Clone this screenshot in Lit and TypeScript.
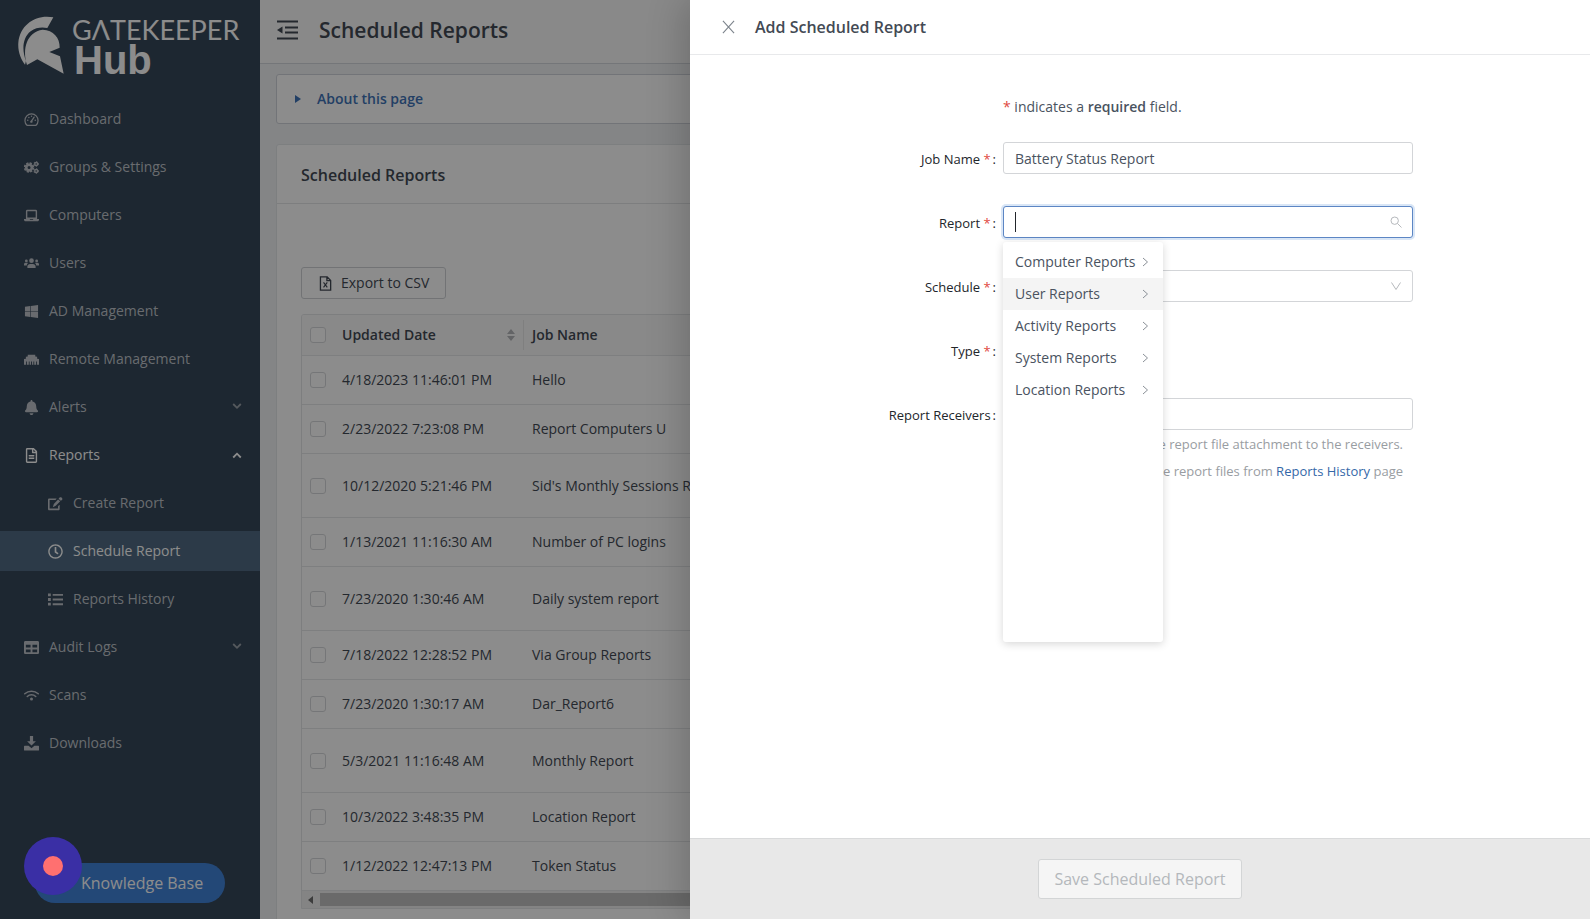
import { LitElement, html, svg, css, nothing } from "lit";
import { customElement, property } from "lit/decorators.js";

const icons: Record<string, { box: string; body: unknown }> = {
  dashboard: {
    box: "0 0 16 16",
    body: svg`<path d="M3.2 14.2a7 7 0 1 1 9.6 0z" fill="none" stroke="currentColor" stroke-width="1.3" stroke-linejoin="round"/><path d="M7.4 10.6 10.8 5.4" stroke="currentColor" stroke-width="1.3" stroke-linecap="round"/><circle cx="8" cy="10.3" r="1.2"/><circle cx="8" cy="4.6" r=".8"/><circle cx="5.2" cy="5.8" r=".8"/><circle cx="4" cy="8.8" r=".8"/><circle cx="12" cy="8.8" r=".8"/>`,
  },
  cogs: {
    box: "0 0 16 16",
    body: svg`<circle cx="5.4" cy="8" r="3" fill="none" stroke="currentColor" stroke-width="2.8"/><circle cx="5.4" cy="8" r="4.7" fill="none" stroke="currentColor" stroke-width="1.8" stroke-dasharray="2.4 1.29"/><circle cx="13" cy="4.2" r="1.6" fill="none" stroke="currentColor" stroke-width="1.5"/><circle cx="13" cy="4.2" r="2.5" fill="none" stroke="currentColor" stroke-width="1" stroke-dasharray="1.3 1.32"/><circle cx="13" cy="11.8" r="1.6" fill="none" stroke="currentColor" stroke-width="1.5"/><circle cx="13" cy="11.8" r="2.5" fill="none" stroke="currentColor" stroke-width="1" stroke-dasharray="1.3 1.32"/>`,
  },
  laptop: {
    box: "0 0 16 16",
    body: svg`<path d="M2.8 11V3.4c0-.5.4-.8.8-.8h8.8c.5 0 .8.4.8.8V11z" fill="none" stroke="currentColor" stroke-width="1.5"/><path d="M0 11.6h6l.5.8h3l.5-.8h6v.8c0 1-.8 1.6-1.6 1.6H1.6C.7 14 0 13.300 0 12.400z"/>`,
  },
  users: {
    box: "0 0 16 16",
    body: svg`<circle cx="8" cy="5" r="2.5"/><path d="M3.600 12.800v-1.500c0-1.700 1.300-2.900 3-2.900h2.800c1.700 0 3 1.200 3 2.900v1.500z"/><circle cx="2.500" cy="5.200" r="1.500"/><circle cx="13.500" cy="5.200" r="1.500"/><path d="M0 10V8.800c0-1 .7-1.700 1.600-1.700h1.600c.5 0 .8.1 1.100.4C3.500 8.100 3 9 2.900 10zM16 10V8.800c0-1-.7-1.700-1.600-1.700h-1.600c-.5 0-.8.1-1.100.4.8.6 1.300 1.500 1.400 2.500z"/>`,
  },
  windows: {
    box: "0 0 448 512",
    body: svg`<path d="M0 93.700l183.600-25.300v177.400H0V93.700zm0 324.600l183.600 25.300V268.400H0v149.900zm203.800 28L448 480V268.400H203.800v177.900zm0-380.600v180.100H448V32L203.800 65.700z"/>`,
  },
  remote: {
    box: "0 0 16 16",
    body: svg`<path d="M0 13.600V7.500l2-.2V5l2-.2V3h8v1.800l2 .2v2.300l2 .2v6.100h-2.200V10h-.9v3.600h-2V10H10v3.600H8.500V10h-1v3.600H6V10H5.100v3.600h-2V10h-.9v3.600z"/>`,
  },
  bell: {
    box: "0 0 448 512",
    body: svg`<path d="M224 512c35.320 0 63.970-28.650 63.970-64H160.030c0 35.350 28.650 64 63.970 64zm215.390-149.710c-19.320-20.760-55.470-51.990-55.470-154.290 0-77.700-54.480-139.900-127.940-155.160V32c0-17.670-14.320-32-31.980-32s-31.980 14.330-31.980 32v20.840C118.560 68.100 64.080 130.300 64.080 208c0 102.300-36.150 133.530-55.470 154.290-6 6.450-8.660 14.160-8.610 21.710.11 16.400 12.980 32 32.100 32h383.800c19.120 0 32-15.600 32.100-32 .05-7.550-2.610-15.270-8.610-21.710z"/>`,
  },
  file: {
    box: "0 0 384 512",
    body: svg`<path d="M288 248v28c0 6.600-5.400 12-12 12H108c-6.600 0-12-5.400-12-12v-28c0-6.600 5.400-12 12-12h168c6.600 0 12 5.400 12 12zm-12 72H108c-6.600 0-12 5.400-12 12v28c0 6.600 5.400 12 12 12h168c6.600 0 12-5.400 12-12v-28c0-6.600-5.400-12-12-12zm108-188.100V464c0 26.500-21.500 48-48 48H48c-26.500 0-48-21.500-48-48V48C0 21.500 21.500 0 48 0h204.100C264.800 0 277 5.100 286 14.100L369.900 98c9 8.900 14.100 21.200 14.100 33.900zm-128-80V128h76.100L256 51.900zM336 464V176H232c-13.300 0-24-10.700-24-24V48H48v416h288z"/>`,
  },
  edit: {
    box: "0 0 576 512",
    body: svg`<path d="M402.300 344.900l32-32c5-5 13.700-1.500 13.700 5.700V464c0 26.500-21.500 48-48 48H48c-26.500 0-48-21.500-48-48V112c0-26.500 21.500-48 48-48h273.500c7.100 0 10.700 8.600 5.700 13.700l-40 44c-1.500 1.500-3.500 2.300-5.700 2.300H62v326h324V362c0-2.100.8-10 2.300-11z"/><path d="M470 172 296.300 345.900l-110.400 50 38-118L386 100zM490 150l-82-78 38-42c22-22 52-22 74 0l16 16c24 24 24 54 0 76z"/>`,
  },
  clock: {
    box: "0 0 512 512",
    body: svg`<path d="M256 8C119 8 8 119 8 256s111 248 248 248 248-111 248-248S393 8 256 8zm0 448c-110.500 0-200-89.500-200-200S145.500 56 256 56s200 89.500 200 200-89.500 200-200 200zm61.800-104.400l-84.900-61.700c-3.100-2.300-4.900-5.900-4.900-9.700V116c0-6.600 5.400-12 12-12h32c6.600 0 12 5.400 12 12v141.700l66.800 48.600c5.400 3.900 6.500 11.400 2.600 16.800L334.600 349c-3.900 5.300-11.400 6.500-16.800 2.600z"/>`,
  },
  list: {
    box: "0 0 16 16",
    body: svg`<path d="M0 1.500h3v3H0zM0 6.500h3v3H0zM0 11.500h3v3H0zM5 2h11v2H5zM5 7h11v2H5zM5 12h11v2H5z"/>`,
  },
  table: {
    box: "0 0 512 512",
    body: svg`<path d="M464 32H48C21.490 32 0 53.490 0 80v352c0 26.510 21.490 48 48 48h416c26.510 0 48-21.490 48-48V80c0-26.510-21.490-48-48-48zM224 416H64v-96h160v96zm0-160H64v-96h160v96zm224 160H288v-96h160v96zm0-160H288v-96h160v96z"/>`,
  },
  wifi: {
    box: "0 0 16 16",
    body: svg`<path d="M.8 6.200a10.500 10.500 0 0 1 14.400 0M3.500 9a6.600 6.600 0 0 1 9 0" fill="none" stroke="currentColor" stroke-width="1.600" stroke-linecap="round"/><circle cx="8" cy="11.800" r="1.600"/>`,
  },
  download: {
    box: "0 0 16 16",
    body: svg`<path d="M6.300 0h3.400v5.500h3L8 10.200 3.300 5.500h3z"/><path d="M0 11.200c0-.4.300-.7.700-.7h4.200L8 13l3.100-2.500h4.200c.4 0 .7.300.7.700v3.600c0 .4-.3.700-.7.700H.7c-.4 0-.7-.3-.7-.7z"/>`,
  },
  chevronDown: {
    box: "0 0 10 10",
    body: svg`<path d="m1.200 2 3.800 3.800L8.800 2" fill="none" stroke="currentColor" stroke-width="1.800"/>`,
  },
  chevronUp: {
    box: "0 0 10 10",
    body: svg`<path d="M1.200 7.500 5 3.700l3.800 3.800" fill="none" stroke="currentColor" stroke-width="1.800"/>`,
  },
  chevronRight: {
    box: "0 0 10 10",
    body: svg`<path d="m2 1 4.500 4L2 9" fill="none" stroke="currentColor" stroke-width="1"/>`,
  },
  arrowDown: {
    box: "0 0 12 12",
    body: svg`<path d="m1.500 2.500 4.500 7 4.500-7" fill="none" stroke="currentColor" stroke-width="1"/>`,
  },
  search: {
    box: "0 0 12 12",
    body: svg`<circle cx="4.700" cy="4.700" r="3.700" fill="none" stroke="currentColor"/><path d="m7.500 7.500 4 4" stroke="currentColor"/>`,
  },
  close: {
    box: "0 0 14 14",
    body: svg`<path d="m1 .5 12 13M13 .5l-12 13" fill="none" stroke="currentColor" stroke-width="1.200"/>`,
  },
  outdent: {
    box: "0 0 22 20",
    body: svg`<path d="M0 1.500h21M8 7.500h13M8 12.500h13M0 18.500h21" stroke="currentColor" stroke-width="1.800"/><path d="M5.500 6.500v7L0 10z"/>`,
  },
  excel: {
    box: "0 0 14 16",
    body: svg`<path d="M1.600 1h7.200l3.700 3.700V15H1.600zM8.500 1v4h4" fill="none" stroke="currentColor" stroke-width="1.400"/><path d="m4.900 6.800 4 5.400M8.900 6.800l-4 5.400" stroke="currentColor" stroke-width="1.200"/>`,
  },
  caretRight: { box: "0 0 6 8", body: svg`<path d="M0 0v8l6-4z"/>` },
  caretLeft: { box: "0 0 6 8", body: svg`<path d="M5 0v8L0 4z"/>` },
  sorter: { box: "0 0 8 12", body: svg`<path d="M0 5 4 0l4 5zM0 7l4 5 4-5z"/>` },
};

@customElement("hub-icon")
class HubIcon extends LitElement {
  @property() name = "";

  static styles = css`
    :host { display: inline-flex; width: 15px; height: 15px; flex: none; }
    .glyph { width: 100%; height: 100%; fill: currentColor; }
  `;

  render() {
    const icon = icons[this.name];
    return icon
      ? html`<svg class="glyph" viewBox=${icon.box} aria-hidden="true">${icon.body}</svg>`
      : nothing;
  }
}

interface NavItem {
  icon: string;
  text: string;
  sub?: boolean;
  active?: boolean;
  open?: boolean;
  chevron?: string;
}

const navItems: NavItem[] = [
  { icon: "dashboard", text: "Dashboard" },
  { icon: "cogs", text: "Groups & Settings" },
  { icon: "laptop", text: "Computers" },
  { icon: "users", text: "Users" },
  { icon: "windows", text: "AD Management" },
  { icon: "remote", text: "Remote Management" },
  { icon: "bell", text: "Alerts", chevron: "chevronDown" },
  { icon: "file", text: "Reports", chevron: "chevronUp", open: true },
  { icon: "edit", text: "Create Report", sub: true },
  { icon: "clock", text: "Schedule Report", sub: true, active: true },
  { icon: "list", text: "Reports History", sub: true },
  { icon: "table", text: "Audit Logs", chevron: "chevronDown" },
  { icon: "wifi", text: "Scans" },
  { icon: "download", text: "Downloads" },
];

@customElement("hub-sidebar")
class HubSidebar extends LitElement {
  static styles = css`
    :host {
      display: flex; flex-direction: column; width: 260px; flex: none;
      background: #364759; color: #bfc4ca; font-size: 14px; line-height: 20px;
    }
    .logo { display: flex; gap: 8px; height: 64px; padding: 16px 0 0 18px; margin-bottom: 19px; color: #fff; }
    .helmet { width: 46px; height: 58px; fill: currentColor; }
    .brand { display: flex; flex-direction: column; }
    .word { font: 400 27px/28px Lato, sans-serif; }
    .hub { font: 700 40px/32px "Liberation Sans", Arial, sans-serif; padding-left: 2px; }
    .item {
      display: flex; align-items: center; gap: 10px; height: 40px; margin-bottom: 8px;
      padding: 0 18px 0 24px; color: inherit; text-decoration: none;
    }
    .sub { padding-left: 48px; }
    .active { background: #506b83; }
    .text { flex: 1; }
    .chev { width: 10px; height: 10px; color: #9ba2aa; }
    .open, .active, .open .chev { color: #fff; }
    .kb {
      height: 40px; width: 190px; margin: auto 0 16px 35px; padding: 0 0 0 46px;
      border: 0; border-radius: 20px; background: #4183d9; color: #fff;
      font: 16px/24px "Open Sans", sans-serif; text-align: left; white-space: nowrap;
    }
  `;

  render() {
    return html`
      <div class="logo">
        <svg class="helmet" viewBox="54 52 138 174" aria-hidden="true">
          <path d="M160 56C110 46 60 76 55 132c-2 28 8 50 20 66l3-12C66 158 66 118 92 98c16-12 34-13 50-10z" />
          <path d="M81 199C66 150 80 100 128 93c32 0 52 25 51 54l-31 13 32 13 11 52-79-43z" />
        </svg>
        <div class="brand"><span class="word">GΛTEKEEPER</span><span class="hub">Hub</span></div>
      </div>
      <nav>
        ${navItems.map(
          (n) => html`<a href="#" class="item ${n.sub ? "sub" : ""} ${n.active ? "active" : ""} ${n.open ? "open" : ""}">
            <hub-icon name=${n.icon}></hub-icon><span class="text">${n.text}</span>
            ${n.chevron ? html`<hub-icon class="chev" name=${n.chevron}></hub-icon>` : nothing}
          </a>`
        )}
      </nav>
      <button class="kb">Knowledge Base</button>
    `;
  }
}

const rows: [string, string, boolean][] = [
  ["4/18/2023 11:46:01 PM", "Hello", false],
  ["2/23/2022 7:23:08 PM", "Report Computers U", false],
  ["10/12/2020 5:21:46 PM", "Sid's Monthly Sessions Report", true],
  ["1/13/2021 11:16:30 AM", "Number of PC logins", false],
  ["7/23/2020 1:30:46 AM", "Daily system report", true],
  ["7/18/2022 12:28:52 PM", "Via Group Reports", false],
  ["7/23/2020 1:30:17 AM", "Dar_Report6", false],
  ["5/3/2021 11:16:48 AM", "Monthly Report", true],
  ["10/3/2022 3:48:35 PM", "Location Report", false],
  ["1/12/2022 12:47:13 PM", "Token Status", false],
];

@customElement("hub-page")
class HubPage extends LitElement {
  static styles = css`
    :host {
      display: flex; flex-direction: column; flex: 1; min-width: 0;
      background: #f0f2f5; color: #434a54; font-size: 14px; line-height: 20px;
    }
    .top {
      display: flex; align-items: center; gap: 20px; height: 64px; flex: none; padding: 0 17px 4px;
      box-sizing: border-box; background: #f9f9f9; border-bottom: 1px solid #d4d7dc;
    }
    .fold { width: 22px; height: 20px; }
    .h1 { margin: 0; font-size: 21px; line-height: 30px; font-weight: 600; }
    .content { display: flex; flex-direction: column; gap: 20px; padding: 10px 17px 0 16px; }
    .about {
      display: flex; align-items: center; gap: 16px; height: 50px; box-sizing: border-box; padding: 0 18px;
      background: #fff; border: 1px solid #d0d4da; border-radius: 3px; color: #3f74b8; font-weight: 600;
    }
    .caret { width: 6px; height: 8px; }
    .card { background: #fff; border: 1px solid #e4e7ea; border-radius: 3px; }
    .h2 { margin: 0; padding: 19px 24px 17px; font-size: 16px; line-height: 22px; font-weight: 600; border-bottom: 1px solid #e3e5e8; }
    .body { padding: 63px 24px; }
    .export {
      display: flex; align-items: center; gap: 8px; height: 32px; padding: 0 16px; box-sizing: border-box;
      background: #fff; border: 1px solid #cfd2d6; border-radius: 3px; color: inherit; font: inherit;
    }
    .grid { margin-top: 15px; border: 1px solid #e3e5e8; border-top-left-radius: 3px; overflow: hidden; }
    table { width: 1400px; table-layout: fixed; border-collapse: separate; border-spacing: 0; }
    th, td { box-sizing: border-box; height: 49px; padding: 0 8px; border-bottom: 1px solid #e6e8ea; text-align: left; }
    th { height: 41px; background: #fafafa; font-weight: 600; }
    .tall { height: 64px; }
    .tick-col { width: 32px; }
    .date-col { width: 190px; }
    .head { display: flex; align-items: center; justify-content: space-between; height: 30px; padding-right: 8px; margin-right: -8px; border-right: 1px solid #e8e8e8; }
    .sort { width: 8px; height: 12px; color: #b4b6ba; }
    .tick {
      display: block; appearance: none; box-sizing: border-box; width: 16px; height: 16px; margin: 0;
      border: 1px solid #d6d8da; border-radius: 3px; background: #fff;
    }
    .scroll { display: flex; align-items: center; gap: 6px; height: 17px; padding-left: 6px; background: #f1f1f1; color: #6d6d6d; }
    .thumb { flex: 1; height: 13px; background: #c1c1c1; }
  `;

  render() {
    return html`
      <header class="top"><hub-icon class="fold" name="outdent"></hub-icon><h1 class="h1">Scheduled Reports</h1></header>
      <div class="content">
        <div class="about"><hub-icon class="caret" name="caretRight"></hub-icon>About this page</div>
        <section class="card">
          <h2 class="h2">Scheduled Reports</h2>
          <div class="body">
            <button class="export"><hub-icon name="excel"></hub-icon>Export to CSV</button>
            <div class="grid">
              <table>
                <thead>
                  <tr>
                    <th class="tick-col"><input class="tick" type="checkbox" aria-label="Select all" /></th>
                    <th class="date-col"><div class="head">Updated Date<hub-icon class="sort" name="sorter"></hub-icon></div></th>
                    <th>Job Name</th>
                  </tr>
                </thead>
                <tbody>
                  ${rows.map(
                    ([date, name, tall]) => html`<tr>
                      <td class=${tall ? "tall" : ""}><input class="tick" type="checkbox" aria-label="Select ${name}" /></td>
                      <td>${date}</td>
                      <td>${name}</td>
                    </tr>`
                  )}
                </tbody>
              </table>
              <div class="scroll"><hub-icon class="caret" name="caretLeft"></hub-icon><div class="thumb"></div></div>
            </div>
          </div>
        </section>
      </div>
    `;
  }
}

const reportGroups = ["Computer Reports", "User Reports", "Activity Reports", "System Reports", "Location Reports"];

@customElement("hub-drawer")
class HubDrawer extends LitElement {
  static styles = css`
    :host {
      display: flex; flex-direction: column; background: #fff; color: #4a535f;
      font-size: 14px; line-height: 20px; box-shadow: -6px 0 36px rgba(0, 0, 0, 0.2);
    }
    .head { display: flex; align-items: center; gap: 20px; height: 54px; padding: 0 32px; border-bottom: 1px solid #e8e9eb; }
    .close { display: flex; padding: 0; border: 0; background: none; color: #7d848c; }
    .x { width: 13px; height: 14px; }
    .title { margin: 0; font-size: 16px; line-height: 24px; font-weight: 600; color: #434a54; }
    .form {
      flex: 1; display: grid; grid-template-columns: 306px 410px; column-gap: 7px; row-gap: 32px;
      align-content: start; padding-top: 40px; min-height: 0;
    }
    .note { grid-column: 2; line-height: 23px; margin: 0 0 -8px; }
    .bold { font-weight: 600; }
    .star { color: #e0483e; }
    .label { height: 32px; line-height: 34px; font-size: 13px; text-align: right; color: #22262b; }
    .colon { margin-left: 2px; }
    .field { position: relative; }
    .box {
      display: block; width: 100%; height: 32px; box-sizing: border-box; padding: 0 11px; appearance: none;
      border: 1px solid #d3d5d8; border-radius: 3px; background: #fff; color: inherit; font: inherit; outline: none;
    }
    .focus { border-color: #5c86c4; box-shadow: 0 0 0 2px rgba(64, 128, 210, 0.2); caret-color: transparent; }
    .cursor { position: absolute; left: 12px; top: 6px; width: 1px; height: 20px; background: #22262b; }
    .mark { position: absolute; right: 11px; top: 10px; width: 12px; height: 12px; color: #b6b9bd; }
    .menu {
      position: absolute; z-index: 2; left: 0; top: 36px; width: 160px; height: 400px; box-sizing: border-box;
      margin: 0; padding: 4px 0; list-style: none; background: #fff; border-radius: 3px;
      box-shadow: 0 2px 8px rgba(0, 0, 0, 0.16);
    }
    .option { display: flex; align-items: center; justify-content: space-between; height: 32px; line-height: 32px; padding: 0 12px; white-space: nowrap; }
    .hover { background: #f4f4f4; }
    .go { width: 10px; height: 10px; color: #8a9097; }
    .hint { margin: 0; padding: 1px 10px 0 0; font-size: 13px; line-height: 27px; text-align: right; white-space: nowrap; color: #999da2; }
    .link { color: #3568a8; text-decoration: none; }
    .foot { display: flex; justify-content: center; padding: 20px 0; border-top: 1px solid #d9dadb; background: #e8e8e8; }
    .save {
      height: 40px; padding: 0 15px; border: 1px solid #d3d5d6; border-radius: 3px; background: #f5f5f5;
      color: #b4b8bc; font: 16px/24px "Open Sans", sans-serif;
    }
  `;

  label(text: string, id: string, required = true) {
    return html`<label class="label" for=${id}>${text}${required ? html` <span class="star">*</span>` : nothing}<span class="colon">:</span></label>`;
  }

  render() {
    return html`
      <header class="head">
        <button class="close" aria-label="Close"><hub-icon class="x" name="close"></hub-icon></button>
        <h2 class="title">Add Scheduled Report</h2>
      </header>
      <form class="form">
        <p class="note"><span class="star">*</span> indicates a <strong class="bold">required</strong> field.</p>
        ${this.label("Job Name", "job")}
        <div class="field"><input class="box" id="job" .value=${"Battery Status Report"} /></div>
        ${this.label("Report", "report")}
        <div class="field">
          <input class="box focus" id="report" /><span class="cursor"></span>
          <hub-icon class="mark" name="search"></hub-icon>
          <ul class="menu">
            ${reportGroups.map(
              (g, i) => html`<li class="option ${i === 1 ? "hover" : ""}">${g}<hub-icon class="go" name="chevronRight"></hub-icon></li>`
            )}
          </ul>
        </div>
        ${this.label("Schedule", "schedule")}
        <div class="field">
          <select class="box" id="schedule"><option></option></select>
          <hub-icon class="mark" name="arrowDown"></hub-icon>
        </div>
        ${this.label("Type", "type")}
        <div class="field"><input type="checkbox" id="type" /></div>
        ${this.label("Report Receivers", "receivers", false)}
        <div class="field">
          <input class="box" id="receivers" />
          <p class="hint">
            Email the report file attachment to the receivers.<br />
            Get the report files from <a class="link" href="#">Reports History</a> page
          </p>
        </div>
      </form>
      <footer class="foot"><button class="save" disabled>Save Scheduled Report</button></footer>
    `;
  }
}

@customElement("app-root")
class AppRoot extends LitElement {
  static styles = css`
    :host {
      display: flex; position: relative; height: 100vh; overflow: hidden;
      font-family: "Open Sans", "Noto Sans", sans-serif;
    }
    .mask { position: absolute; inset: 0; background: rgba(0, 0, 0, 0.45); }
    .drawer { position: absolute; top: 0; right: 0; bottom: 0; width: 900px; max-width: 100%; }
    .record {
      position: absolute; left: 24px; bottom: 24px; width: 58px; height: 58px; padding: 0;
      display: grid; place-items: center; border: 0; border-radius: 50%; background: #3a2fa5;
    }
    .dot { width: 20px; height: 20px; border-radius: 50%; background: #ff7070; }
  `;

  render() {
    return html`
      <hub-sidebar></hub-sidebar>
      <hub-page></hub-page>
      <div class="mask"></div>
      <button class="record" aria-label="Record"><span class="dot"></span></button>
      <hub-drawer class="drawer"></hub-drawer>
    `;
  }
}
